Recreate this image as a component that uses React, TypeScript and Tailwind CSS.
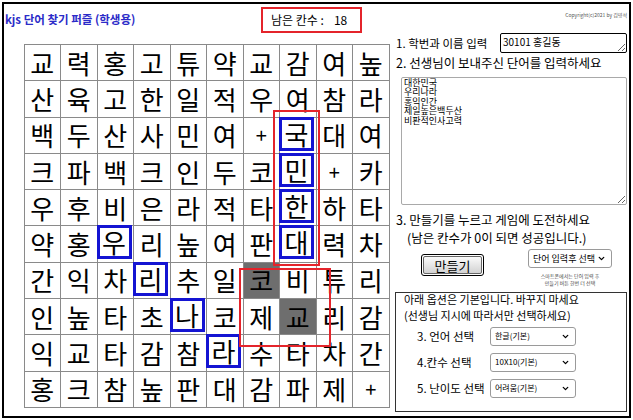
import { ChevronDown } from "lucide-react";

const ROWS = [
  "교력홍고튜약교감여높",
  "산육고한일적우여참라",
  "백두산사민여+국대여",
  "크파백크인두코민+카",
  "우후비은라적타한하타",
  "약홍우리높여판대력차",
  "간익차리추일코비튜리",
  "인높타초나코제교리감",
  "익교타감참라추타차간",
  "홍크참높판대감파제+",
];

const FOUND = new Set(["2-7", "3-7", "4-7", "5-7", "5-2", "6-3", "7-4", "8-5"]);
const SHADED = new Set(["6-6", "7-7"]);

function Cell({ ch, found, shaded }: { ch: string; found: boolean; shaded: boolean }) {
  const glyph = ch === "+" ? "text-[20px]" : "text-[26px]";
  return (
    <div
      className={`h-[36.3px] border-r border-b border-[#8a8a8a] flex ${shaded ? "bg-[#6e6e6e]" : ""}`}
    >
      {found ? (
        <div
          className={`relative -ml-px -mt-px w-[35px] h-[34px] border-[3px] border-[#1414d2] flex items-center justify-center leading-none ${glyph}`}
        >
          {ch}
        </div>
      ) : (
        <div className={`w-full h-full flex items-center justify-center leading-none ${glyph}`}>{ch}</div>
      )}
    </div>
  );
}

function Board() {
  return (
    <div className="relative ml-[19.5px] mt-[4px] w-fit">
      <div className="grid grid-cols-[repeat(10,36.5px)] border-l border-t border-[#8a8a8a]">
        {ROWS.flatMap((row, i) =>
          Array.from(row).map((ch, j) => (
            <Cell
              key={`${i}-${j}`}
              ch={ch}
              found={FOUND.has(`${i}-${j}`)}
              shaded={SHADED.has(`${i}-${j}`)}
            />
          ))
        )}
      </div>
      {/* hint boxes */}
      <div className="absolute left-[249px] top-[66px] w-[47px] h-[156px] border-2 border-[#e4242b]" />
      <div className="absolute left-[215px] top-[224px] w-[92px] h-[79px] border-2 border-[#e4242b]" />
    </div>
  );
}

function Picker({ label, className, textClass }: { label: string; className: string; textClass: string }) {
  return (
    <div
      className={`flex items-center justify-between border border-[#9a9a9a] rounded-[3px] bg-white pl-[4px] pr-[5px] ${className}`}
    >
      <span className={textClass}>{label}</span>
      <ChevronDown size={9} strokeWidth={3.5} />
    </div>
  );
}

function Option({ label, value }: { label: string; value: string }) {
  return (
    <div className="flex items-center h-[20px] pl-[21px]">
      <span className="w-[73px] text-[11.5px] leading-[14px]">{label}</span>
      <Picker label={value} className="w-[86px] h-[19px]" textClass="text-[8px] leading-[10px]" />
    </div>
  );
}

export default function App() {
  return (
    <div className="w-[633px] h-[420px] bg-white pl-[2px] pt-[2px] text-black font-['Noto_Sans_CJK_KR',sans-serif]">
      <div className="w-[629px] h-[416px] border-2 border-black flex">
        <div className="w-[392px] flex flex-col">
          <div className="h-[36px] flex items-start">
            <div className="w-[257px] pl-[1px] pt-[7px] text-[11.5px] leading-[16px] font-bold text-[#2b2bc8]">
              kjs 단어 찾기 퍼즐 (학생용)
            </div>
            <div className="mt-[3px] w-[101px] h-[26px] border-2 border-[#e4242b] flex items-center pl-[8px] text-[12px]">
              <span>남은 칸수 :</span>
              <span className="ml-[10px]">18</span>
            </div>
          </div>
          <Board />
        </div>

        <div className="flex-1 flex flex-col">
          <div className="h-[29px] pt-[8px] pr-[2px] text-right text-[5px] leading-[6px] text-[#555]">
            Copyright(c)2021 by 김영석
          </div>

          <div className="flex items-center h-[20px]">
            <span className="w-[104px] text-[11.5px] leading-[14px]">1. 학번과 이름 입력</span>
            <textarea
              defaultValue="30101 홍길동"
              className="w-[127px] h-[20px] border border-black rounded-[2px] text-[10px] leading-[11px] px-[2px] pt-[2px] overflow-hidden"
            />
          </div>

          <div className="mt-[2px] h-[16px] text-[12.5px] leading-[16px]">2. 선생님이 보내주신 단어를 입력하세요</div>

          <textarea
            defaultValue={"대한민국\n우리나라\n홍익인간\n제일높은백두산\n비판적인사고력"}
            className="ml-[5px] mt-[6px] w-[226px] h-[128px] border border-[#a9a9a9] rounded-[2px] text-[9px] leading-[9.4px] pl-[2px] pt-0 overflow-hidden"
          />

          <div className="mt-[7px] h-[16px] text-[12.5px] leading-[16px]">3. 만들기를 누르고 게임에 도전하세요</div>
          <div className="mt-[2px] ml-[11px] h-[16px] text-[12.5px] leading-[16px]">(남은 칸수가 0이 되면 성공입니다.)</div>

          <div className="h-[46px] flex items-start">
            <div className="ml-[25px] mt-[8px] w-[63px] h-[22px] rounded-[3px] border border-black p-[1px]">
              <div className="h-full rounded-[2px] border border-[#666] bg-linear-to-b from-[#fbfbfb] to-[#d2d2d2] flex items-center justify-center text-[13px] leading-none">
                만들기
              </div>
            </div>
            <div className="ml-[44px] mt-[3px] flex flex-col items-center">
              <Picker label="단어 입력후 선택" className="w-[84px] h-[19px]" textClass="text-[9px] leading-[11px]" />
              <div className="mt-[3.5px] text-[5px] leading-[7px] text-center text-[#444]">
                스마트폰에서는 단어 입력 후
                <br />
                만들기 버튼 한번 더 선택
              </div>
            </div>
          </div>

          <div className="-ml-px w-[232px] h-[120px] border border-[#333]">
            <p className="-mt-[2px] pl-[8px] text-[11px] leading-[16px]">
              아래 옵션은 기본입니다. 바꾸지 마세요
              <br />
              (선생님 지시에 따라서만 선택하세요)
            </p>
            <div className="mt-[3px] flex flex-col gap-[6px]">
              <Option label="3. 언어 선택" value="한글(기본)" />
              <Option label="4.칸수 선택" value="10X10(기본)" />
              <Option label="5. 난이도 선택" value="어려움(기본)" />
            </div>
          </div>
        </div>
      </div>
    </div>
  );
}
